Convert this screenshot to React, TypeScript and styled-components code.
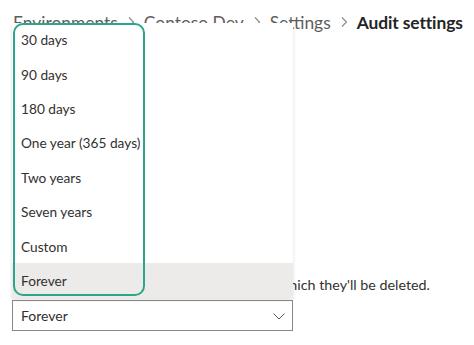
import * as React from 'react'
import styled, { createGlobalStyle } from 'styled-components'

const GlobalStyle = createGlobalStyle`
    body {
        margin: 0;
        background: #ffffff;
        font-family: "Segoe UI", Lato, "Noto Sans", sans-serif;
        color: #323130;
    }
`

const Page = styled.div`
    position: relative;
    width: 474px;
    height: 345px;
    overflow: hidden;
    padding: 9px 0 0 13px;
    box-sizing: border-box;
`

const Breadcrumb = styled.nav`
    display: flex;
    align-items: center;
    gap: 8px;
    height: 26px;
    white-space: nowrap;
    font-size: 17.4px;
`

const Crumb = styled.span<{ current?: boolean }>`
    color: ${props => props.current ? '#242424' : '#605e5c'};
    font-weight: ${props => props.current ? 700 : 400};
    letter-spacing: ${props => props.current ? '-0.1px' : '0'};
`

const Separator = styled.svg`
    width: 10px;
    height: 12px;
    flex: none;
`

const Description = styled.div`
    margin-top: 241px;
    width: 417px;
    height: 20px;
    overflow: hidden;
    white-space: nowrap;
    text-align: right;
    font-size: 14.3px;
    color: #323130;
    direction: rtl;
`

const DescriptionText = styled.span`
    direction: ltr;
    unicode-bidi: embed;
`

const Select = styled.div`
    margin-top: 4px;
    margin-left: -1px;
    width: 281px;
    height: 31px;
    box-sizing: border-box;
    border: 1px solid #8a8886;
    display: flex;
    align-items: center;
    justify-content: space-between;
    padding: 0 6px 0 8px;
    font-size: 14px;
    color: #323130;
`

const Chevron = styled.svg`
    width: 14px;
    height: 14px;
`

const Menu = styled.ul`
    position: absolute;
    left: 12px;
    top: 22.5px;
    width: 281px;
    margin: 0;
    padding: 0;
    list-style: none;
    background: #ffffff;
    box-shadow: 0 1.6px 3.6px rgba(0, 0, 0, 0.13), 0 0.3px 0.9px rgba(0, 0, 0, 0.11);
`

const MenuItem = styled.li<{ selected?: boolean }>`
    height: 34.4px;
    display: flex;
    align-items: center;
    padding-left: 9px;
    font-size: 13.7px;
    color: #323130;
    background: ${props => props.selected ? '#edebe9' : 'transparent'};
`

const Highlight = styled.div`
    position: absolute;
    left: 13px;
    top: 23px;
    width: 132px;
    height: 273px;
    box-sizing: border-box;
    border: 2px solid #2ba68a;
    border-radius: 10px;
    pointer-events: none;
`

const crumbs = ['Environments', 'Contoso Dev', 'Settings']
const options = ['30 days', '90 days', '180 days', 'One year (365 days)', 'Two years', 'Seven years', 'Custom', 'Forever']

const SeparatorIcon = () => (
    <Separator viewBox="0 0 10 12">
        <path d="M3 1.5 L7.5 6 L3 10.5" fill="none" stroke="#8a8886" strokeWidth="1.1" />
    </Separator>
)

export default function App() {
    return (
        <Page>
            <GlobalStyle />
            <Breadcrumb>
                {crumbs.map(c => (
                    <React.Fragment key={c}>
                        <Crumb>{c}</Crumb>
                        <SeparatorIcon />
                    </React.Fragment>
                ))}
                <Crumb current>Audit settings</Crumb>
            </Breadcrumb>
            <Description>
                <DescriptionText>Set how long to keep audit logs, after which they'll be deleted.</DescriptionText>
            </Description>
            <Select>
                <span>Forever</span>
                <Chevron viewBox="0 0 14 14">
                    <path d="M1.5 4.5 L7 10 L12.5 4.5" fill="none" stroke="#605e5c" strokeWidth="1" />
                </Chevron>
            </Select>
            <Menu>
                {options.map(o => (
                    <MenuItem key={o} selected={o === 'Forever'}>{o}</MenuItem>
                ))}
            </Menu>
            <Highlight />
        </Page>
    )
}
